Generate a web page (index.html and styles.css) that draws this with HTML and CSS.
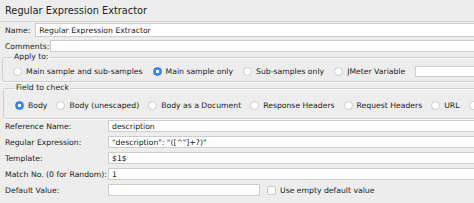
FILE: index.html
```html
<!DOCTYPE html>
<html lang="en">
<head>
    <meta charset="UTF-8">
    <title>Regular Expression Extractor</title>
    <link rel="stylesheet" href="styles.css">
</head>
<body>
    <div class="panel">
        <div class="title">Regular Expression Extractor</div>

        <div class="top-row name-row">
            <label for="name">Name:</label>
            <input class="field" id="name" type="text" value="Regular Expression Extractor">
        </div>
        <div class="top-row comments-row">
            <label for="comments">Comments:</label>
            <input class="field" id="comments" type="text" value="">
        </div>

        <fieldset class="group apply">
            <legend>Apply to:</legend>
            <div class="options">
                <label class="opt"><input class="radio" type="radio" name="scope">Main sample and sub-samples</label>
                <label class="opt"><input class="radio" type="radio" name="scope" checked>Main sample only</label>
                <label class="opt"><input class="radio" type="radio" name="scope">Sub-samples only</label>
                <label class="opt"><input class="radio" type="radio" name="scope">JMeter Variable</label>
                <input class="field var-field" type="text" value="">
            </div>
        </fieldset>

        <fieldset class="group check-field">
            <legend>Field to check</legend>
            <div class="options">
                <label class="opt"><input class="radio" type="radio" name="field" checked>Body</label>
                <label class="opt"><input class="radio" type="radio" name="field">Body (unescaped)</label>
                <label class="opt"><input class="radio" type="radio" name="field">Body as a Document</label>
                <label class="opt"><input class="radio" type="radio" name="field">Response Headers</label>
                <label class="opt"><input class="radio" type="radio" name="field">Request Headers</label>
                <label class="opt"><input class="radio" type="radio" name="field">URL</label>
                <label class="opt"><input class="radio" type="radio" name="field"></label>
            </div>
        </fieldset>

        <div class="form">
            <div class="form-row">
                <span class="form-label">Reference Name:</span>
                <input class="field" type="text" value="description">
            </div>
            <div class="form-row">
                <span class="form-label">Regular Expression:</span>
                <input class="field" type="text" value='"description": "([^"]+?)"'>
            </div>
            <div class="form-row">
                <span class="form-label">Template:</span>
                <input class="field" type="text" value="$1$">
            </div>
            <div class="form-row">
                <span class="form-label">Match No. (0 for Random):</span>
                <input class="field" type="text" value="1">
            </div>
            <div class="form-row default-row">
                <span class="form-label">Default Value:</span>
                <input class="field" type="text" value="">
                <label class="opt"><input class="check" type="checkbox">Use empty default value</label>
            </div>
        </div>
    </div>
</body>
</html>
```

FILE: styles.css
```css
body {
    margin: 0;
    background-color: #ededed;
    font-family: "DejaVu Sans", sans-serif;
    font-size: 7.7px;
    color: #222;
    overflow: hidden;
}
.panel {
    width: 560px;
}
.title {
    height: 21px;
    line-height: 22px;
    padding-left: 5px;
    font-size: 9.8px;
    border-bottom: 1px solid #d4d4d4;
}
.top-row {
    display: flex;
    align-items: center;
    padding-left: 5px;
}
.name-row {
    margin-top: 1px;
    height: 14px;
}
.name-row .field {
    margin-left: 5px;
}
.comments-row {
    margin-top: 3px;
    height: 12px;
}
.comments-row .field {
    margin-left: 1px;
}
.field {
    flex: 1;
    min-width: 0;
    height: 100%;
    box-sizing: border-box;
    margin: 0;
    padding: 0 3px;
    border: 1px solid #cdcdcd;
    background-color: #fff;
    font: inherit;
    color: inherit;
    outline: none;
}
.group {
    margin: 0;
    border: 1px solid #cfcfcf;
    border-radius: 3px;
    box-shadow: inset 0 1px 0 #f8f8f8, 0 1px 0 #f8f8f8;
    min-width: 0;
}
.group legend {
    padding: 0 1px;
    line-height: 10px;
}
.apply {
    margin-left: 2px;
    padding: 4px 0 4px 10px;
}
.check-field {
    margin-top: 1px;
    margin-left: 3px;
    padding: 7px 0 7px 11px;
}
.check-field .opt {
    margin-right: 9px;
}
.options {
    display: flex;
    align-items: center;
    height: 11px;
    white-space: nowrap;
}
.opt {
    display: flex;
    align-items: center;
    margin-right: 10px;
    white-space: nowrap;
}
.radio {
    appearance: none;
    flex: none;
    width: 9px;
    height: 9px;
    margin: 0 4px 0 0;
    box-sizing: border-box;
    border: 1px solid #cbcbcb;
    border-radius: 50%;
    background-color: #fff;
}
.radio:checked {
    border-color: #2f78dc;
    background: radial-gradient(circle, #fff 0 1.4px, #3b88ee 2px);
}
.var-field {
    height: 11px;
}
.form {
    display: flex;
    flex-direction: column;
    gap: 4px;
    padding-left: 5px;
    margin-top: 1px;
}
.form-row {
    display: flex;
    align-items: center;
    height: 12px;
}
.form-label {
    flex: none;
    width: 103px;
}
.default-row .field {
    flex: none;
    width: 152px;
}
.check {
    appearance: none;
    flex: none;
    width: 9px;
    height: 9px;
    margin: 0 4px 0 7px;
    box-sizing: border-box;
    border: 1px solid #cbcbcb;
    border-radius: 2px;
    background-color: #fff;
}
```
